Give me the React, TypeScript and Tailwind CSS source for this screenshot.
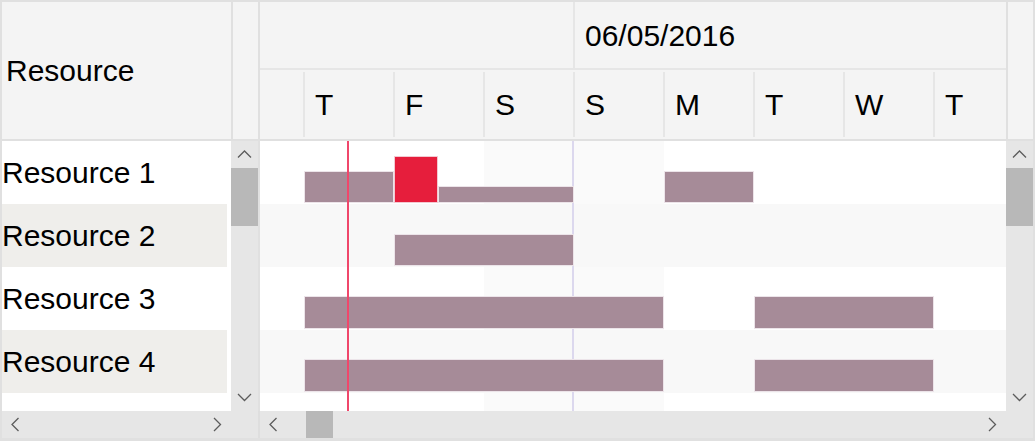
import React from 'react';

const DAY_W = 90;
const FIRST_DAY_X = 44; // chart-relative x where the first full day starts

const DAYS = ['T', 'F', 'S', 'S', 'M', 'T', 'W', 'T'];
const WEEKEND = [2, 3];

interface Task {
  row: number;
  from: number; // in days
  to: number;
  top: number;
  height: number;
  kind: 'normal' | 'critical';
}

const TASKS: Task[] = [
  { row: 0, from: 0, to: 1, top: 30, height: 32, kind: 'normal' },
  { row: 0, from: 1, to: 1.49, top: 15, height: 47, kind: 'critical' },
  { row: 0, from: 1.49, to: 3, top: 45, height: 17, kind: 'normal' },
  { row: 0, from: 4, to: 5, top: 30, height: 32, kind: 'normal' },
  { row: 1, from: 1, to: 3, top: 30, height: 32, kind: 'normal' },
  { row: 2, from: 0, to: 4, top: 29, height: 33, kind: 'normal' },
  { row: 2, from: 5, to: 7, top: 29, height: 33, kind: 'normal' },
  { row: 3, from: 0, to: 4, top: 29, height: 33, kind: 'normal' },
  { row: 3, from: 5, to: 7, top: 29, height: 33, kind: 'normal' },
];

const RESOURCES = ['Resource 1', 'Resource 2', 'Resource 3', 'Resource 4'];

function Chevron({ dir }: { dir: 'up' | 'down' | 'left' | 'right' }) {
  const vertical = dir === 'up' || dir === 'down';
  const points =
    dir === 'up'
      ? '1,7.5 7.5,1 14,7.5'
      : dir === 'down'
        ? '1,1 7.5,7.5 14,1'
        : dir === 'left'
          ? '7.5,1 1,7.5 7.5,14'
          : '1,1 7.5,7.5 1,14';
  return (
    <svg width={vertical ? 15 : 9} height={vertical ? 9 : 15} viewBox={vertical ? '0 0 15 9' : '0 0 9 15'}>
      <polyline points={points} fill="none" stroke="#5c5c5c" strokeWidth="1.3" />
    </svg>
  );
}

function ScrollButton({ dir }: { dir: 'up' | 'down' | 'left' | 'right' }) {
  return (
    <div className="flex h-[27px] w-[27px] shrink-0 items-center justify-center">
      <Chevron dir={dir} />
    </div>
  );
}

function VScrollbar() {
  return (
    <div className="flex w-[27px] shrink-0 flex-col bg-[#e6e6e6]">
      <ScrollButton dir="up" />
      <div className="h-[58px] bg-[#b8b8b8]" />
      <div className="flex-1" />
      <ScrollButton dir="down" />
    </div>
  );
}

function dayX(d: number) {
  return FIRST_DAY_X + d * DAY_W;
}

function ChartRow({ index }: { index: number }) {
  const striped = index % 2 === 1;
  const tasks = TASKS.filter((t) => t.row === index);
  return (
    <div className="relative flex h-[63px]">
      <div className={`w-[44px] shrink-0 ${striped ? 'bg-[#f8f8f8]' : 'bg-white'}`} />
      {DAYS.map((_, i) => (
        <div
          key={i}
          className={`w-[90px] shrink-0 ${
            striped ? 'bg-[#f8f8f8]' : WEEKEND.includes(i) ? 'bg-[#fafafa]' : 'bg-white'
          }`}
        />
      ))}
      {tasks.map((t, i) => (
        <div
          key={i}
          className={`absolute z-10 border ${
            t.kind === 'critical' ? 'border-[#f3c9d1] bg-[#e61e3c]' : 'border-[#ece4e9] bg-[#a68b98]'
          }`}
          style={{
            left: dayX(t.from),
            width: dayX(t.to) - dayX(t.from),
            top: t.top,
            height: t.height,
          }}
        />
      ))}
    </div>
  );
}

export default function App() {
  return (
    <div className="flex h-[441px] w-[1035px] flex-col overflow-hidden border-2 border-b-[3px] border-[#e0e0e0] bg-white font-['Liberation_Sans',Arial,sans-serif] text-[30px] text-black">
      {/* Header */}
      <div className="flex h-[139px] shrink-0 border-b-2 border-[#e0e0e0] bg-[#f4f4f4]">
        <div className="flex w-[229px] shrink-0 items-center pl-1">Resource</div>
        <div className="w-[27px] shrink-0 border-l-2 border-[#e0e0e0]" />
        <div className="w-[2px] shrink-0 bg-[#e0e0e0]" />
        <div className="flex w-[746px] shrink-0 flex-col overflow-hidden">
          <div className="flex h-[68px] shrink-0 border-b-2 border-[#e6e6e6]">
            <div className="w-[313px] shrink-0" />
            <div className="flex flex-1 items-center border-l-2 border-[#e6e6e6] pl-[10px]">06/05/2016</div>
          </div>
          <div className="flex flex-1">
            <div className="w-[43px] shrink-0" />
            {DAYS.map((d, i) => (
              <div key={i} className="my-[2px] flex w-[90px] shrink-0 items-center border-l-2 border-[#e6e6e6] pl-[10px]">
                {d}
              </div>
            ))}
          </div>
        </div>
        <div className="w-[27px] shrink-0 border-l-2 border-[#e0e0e0]" />
      </div>

      {/* Body */}
      <div className="flex h-[270px] shrink-0">
        <div className="w-[229px] shrink-0 bg-white pr-1">
          {RESOURCES.map((r, i) => (
            <div key={r} className={`flex h-[63px] items-center ${i % 2 === 1 ? 'bg-[#efeeeb]' : 'bg-white'}`}>
              {r}
            </div>
          ))}
        </div>
        <VScrollbar />
        <div className="w-[2px] shrink-0 bg-[#e0e0e0]" />
        <div className="relative w-[746px] shrink-0 overflow-hidden">
          {RESOURCES.map((r, i) => (
            <ChartRow key={r} index={i} />
          ))}
          <div className="flex h-[18px]">
            <div className="w-[44px] shrink-0" />
            {DAYS.map((_, i) => (
              <div key={i} className={`w-[90px] shrink-0 ${WEEKEND.includes(i) ? 'bg-[#fafafa]' : 'bg-white'}`} />
            ))}
          </div>
          {/* date boundary, under the tasks */}
          <div className="absolute top-0 bottom-0 left-[312px] z-[5] w-[2px] bg-[#dcd8ee]" />
          {/* current time marker, over the tasks */}
          <div className="absolute top-0 bottom-0 left-[87px] z-20 w-[2px] bg-[#f0476b]" />
        </div>
        <VScrollbar />
      </div>

      {/* Horizontal scrollbars */}
      <div className="flex h-[27px] shrink-0 bg-[#e6e6e6]">
        <div className="flex w-[229px] shrink-0">
          <ScrollButton dir="left" />
          <div className="flex-1" />
          <ScrollButton dir="right" />
        </div>
        <div className="w-[27px] shrink-0" />
        <div className="w-[2px] shrink-0 bg-[#dedede]" />
        <div className="flex w-[746px] shrink-0">
          <ScrollButton dir="left" />
          <div className="w-[19px] shrink-0" />
          <div className="w-[27px] shrink-0 bg-[#b8b8b8]" />
          <div className="flex-1" />
          <ScrollButton dir="right" />
        </div>
        <div className="w-[27px] shrink-0" />
      </div>
    </div>
  );
}
